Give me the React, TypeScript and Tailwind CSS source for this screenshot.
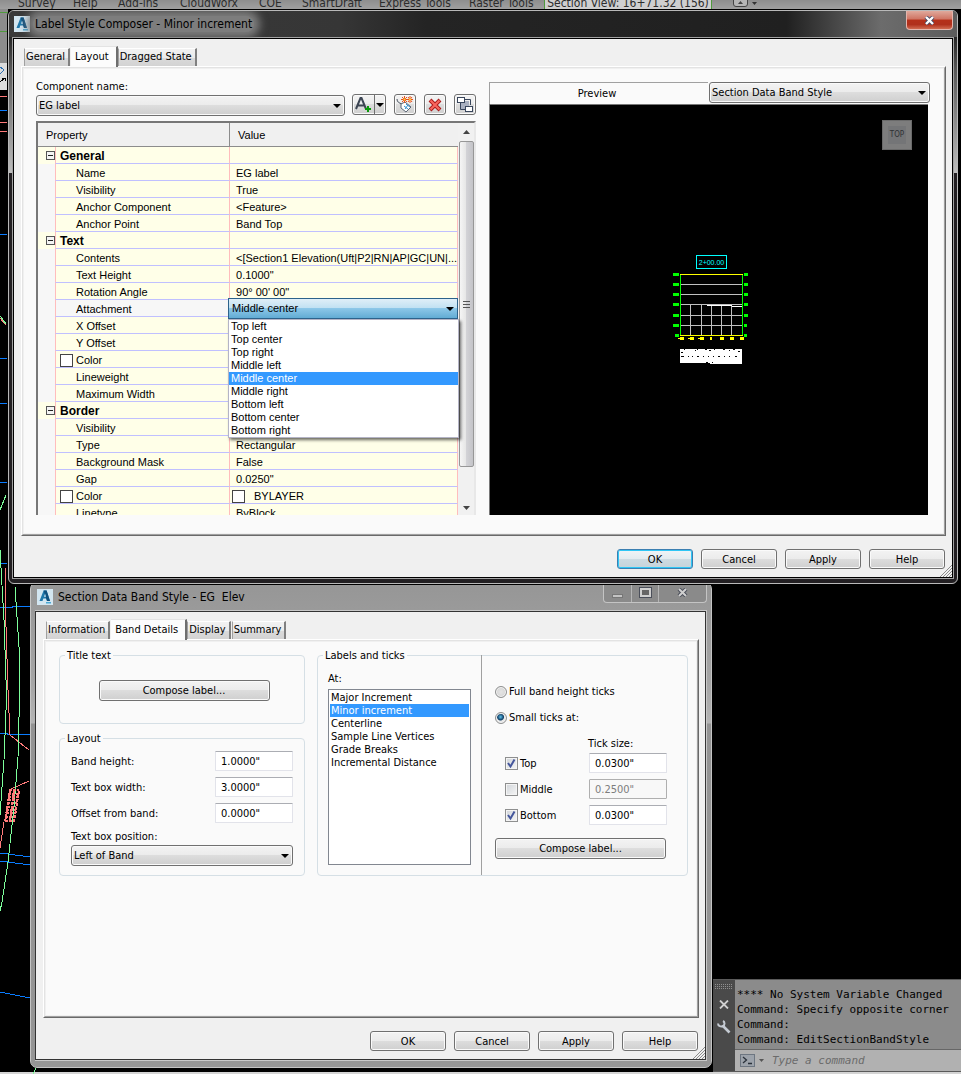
import React, { useState } from "react";
import clsx from "clsx";

const FACE =
  "bg-[linear-gradient(#f3f3f3,#ebebeb_50%,#dddddd_50%,#cfcfcf)] border border-[#707070] rounded-[3px] shadow-[inset_0_0_0_1px_#fafafa]";

interface PropertyRow {
  name: string;
  value?: string;
  group?: boolean;
  swatch?: boolean;
  valueSwatch?: boolean;
}

const PROPERTIES: PropertyRow[] = [
  { name: "General", group: true },
  { name: "Name", value: "EG label" },
  { name: "Visibility", value: "True" },
  { name: "Anchor Component", value: "<Feature>" },
  { name: "Anchor Point", value: "Band Top" },
  { name: "Text", group: true },
  { name: "Contents", value: "<[Section1 Elevation(Uft|P2|RN|AP|GC|UN|..." },
  { name: "Text Height", value: '0.1000"' },
  { name: "Rotation Angle", value: "90° 00' 00\"" },
  { name: "Attachment" },
  { name: "X Offset" },
  { name: "Y Offset" },
  { name: "Color", swatch: true },
  { name: "Lineweight" },
  { name: "Maximum Width" },
  { name: "Border", group: true },
  { name: "Visibility" },
  { name: "Type", value: "Rectangular" },
  { name: "Background Mask", value: "False" },
  { name: "Gap", value: '0.0250"' },
  { name: "Color", value: "BYLAYER", swatch: true, valueSwatch: true },
  { name: "Linetype", value: "ByBlock" },
];

const ATTACHMENTS = [
  "Top left",
  "Top center",
  "Top right",
  "Middle left",
  "Middle center",
  "Middle right",
  "Bottom left",
  "Bottom center",
  "Bottom right",
];

const INCREMENTS = [
  "Major Increment",
  "Minor increment",
  "Centerline",
  "Sample Line Vertices",
  "Grade Breaks",
  "Incremental Distance",
];

const RIBBON_TABS = [
  { label: "Survey", width: "w-[55px]" },
  { label: "Help", width: "w-[45px]" },
  { label: "Add-ins", width: "w-[62px]" },
  { label: "CloudWorx", width: "w-[79px]" },
  { label: "COE", width: "w-[43px]" },
  { label: "SmartDraft", width: "w-[77px]" },
  { label: "Express Tools", width: "w-[90px]" },
  { label: "Raster Tools", width: "w-[75px]" },
];

const Caret = () => (
  <svg width="8" height="4" viewBox="0 0 8 4" aria-hidden="true">
    <path d="M0 0h8L4 4z" fill="#000" />
  </svg>
);

const AppLogo = () => (
  <svg width="16" height="16" viewBox="0 0 16 16" aria-hidden="true">
    <rect width="16" height="16" fill="#d3e6f1" />
    <path d="M2.500 12 6.600 1.500h3L13 12h-3L9.300 9.500H6.300L5.500 12z" fill="#1f78ab" />
    <path d="M6.600 1.500h3L13 12h-3z" fill="#0f4f7d" />
    <path d="M7 7.800h2L8.100 4.800z" fill="#d3e6f1" />
    <path d="M9 13h5v1.500H9z" fill="#4aa8d4" />
  </svg>
);

interface SelectProps {
  id: string;
  label?: string;
  options: string[];
  className?: string;
}

const Select: React.FC<SelectProps> = ({ id, label, options, className }) => (
  <div className={clsx("relative h-[21px]", className)}>
    <select
      id={id}
      aria-label={label}
      className={clsx(FACE, "block w-full h-full appearance-none pl-[2px] pr-5 outline-none")}
    >
      {options.map((o) => (
        <option key={o}>{o}</option>
      ))}
    </select>
    <span className="absolute right-[4px] top-[9px] pointer-events-none">
      <Caret />
    </span>
  </div>
);

const DialogButtons = ({ primary }: { primary?: boolean }) => (
  <div className="flex justify-end gap-2 pr-px">
    {["OK", "Cancel", "Apply", "Help"].map((label) => (
      <button
        key={label}
        className={clsx(
          "w-[76px] h-5 text-center",
          primary && label === "OK"
            ? "rounded-[3px] border border-[#3c7fb1] shadow-[inset_0_0_0_1px_#2fc6f5] bg-[linear-gradient(#f0f4f6,#e3ebef_50%,#cddbe2_50%,#c6d3da)]"
            : FACE
        )}
      >
        {label}
      </button>
    ))}
  </div>
);

interface TabsProps {
  tabs: string[];
  active: string;
}

const Tabs: React.FC<TabsProps> = ({ tabs, active }) => (
  <div role="tablist" className="flex items-end">
    {tabs.map((tab) => (
      <button
        key={tab}
        role="tab"
        aria-selected={tab === active}
        className={clsx(
          "border-t text-left",
          tab === active
            ? "h-[21px] pl-[4px] pr-[7px] pb-[2px] -mb-px bg-[#fcfcfc] border-t-[#e3e3e3] border-r-2 border-r-[#6f6f6f] z-10"
            : "h-[18px] pl-px pr-[3px] mr-px pb-[3px] bg-[linear-gradient(#f2f2f2,#ebebeb_50%,#dadada_50%,#d3d3d3)] border-t-white border-l border-l-[#a0a0a0] border-r-2 border-r-[#808080]"
        )}
      >
        {tab}
      </button>
    ))}
  </div>
);

const TabPanel = ({
  className,
  children,
}: {
  className?: string;
  children: React.ReactNode;
}) => (
  <div className="border border-t-white border-l-white border-r-[#696969] border-b-[#696969]">
    <div className="border border-t-[#e3e3e3] border-l-[#e3e3e3] border-r-[#a0a0a0] border-b-[#a0a0a0]">
      <div className={clsx("border border-[#f0f0f0] bg-[#fafafa]", className)}>
        {children}
      </div>
    </div>
  </div>
);

const Grip = () => (
  <svg
    className="absolute right-0 bottom-0"
    width="12"
    height="12"
    viewBox="0 0 12 12"
    aria-hidden="true"
  >
    <path d="M0 12 12 0M3 12l9-9M6 12l6-6M9 12l3-3" stroke="#8c8c8c" fill="none" />
  </svg>
);

const ToolButton = ({
  label,
  children,
}: {
  label: string;
  children: React.ReactNode;
}) => (
  <button
    aria-label={label}
    className={clsx(FACE, "w-[22px] h-[21px] flex items-center justify-center")}
  >
    {children}
  </button>
);

const Swatch = () => (
  <span className="inline-block w-[13px] h-[13px] bg-white border border-[#444] shrink-0" />
);

const AttachmentPicker = () => {
  const [selected, setSelected] = useState("Middle center");

  return (
    <div className="absolute -left-[2px] -right-px -top-[2px] z-20">
      <div className="relative h-[21px]">
        <select
          aria-label="Attachment"
          value={selected}
          onChange={(e) => setSelected(e.target.value)}
          className="block w-full h-full appearance-none pl-[3px] outline-none border border-[#2c628b] bg-[linear-gradient(#e0eff8,#bfe0f2_50%,#8cc7e8_50%,#62acd4)]"
        >
          {ATTACHMENTS.map((a) => (
            <option key={a}>{a}</option>
          ))}
        </select>
        <span className="absolute right-[4px] top-[9px] pointer-events-none">
          <Caret />
        </span>
      </div>
      <ul
        role="listbox"
        aria-label="Attachment options"
        className="bg-white border border-[#b4b4c6] -mr-px shadow-[2px_2px_3px_rgba(0,0,0,0.6)]"
      >
        {ATTACHMENTS.map((a) => (
          <li
            key={a}
            role="option"
            aria-selected={a === selected}
            onClick={() => setSelected(a)}
            className={clsx(
              "leading-[13px] pl-[2px]",
              a === selected && "bg-[#3399ff] text-white"
            )}
          >
            {a}
          </li>
        ))}
      </ul>
    </div>
  );
};

const PropertyTable = () => (
  <table className="w-full table-fixed border-separate border-spacing-0 text-left leading-[13px]">
    <colgroup>
      <col className="w-[17px]" />
      <col className="w-[174px]" />
      <col />
    </colgroup>
    <thead>
      <tr className="h-6 bg-[#f0f0f0]">
        <th colSpan={2} className="p-0 pt-[2px] pl-2 font-normal border-b border-[#8c8c8c]">
          Property
        </th>
        <th className="p-0 pt-[2px] pl-2 font-normal border-b border-l border-[#8c8c8c]">
          Value
        </th>
      </tr>
    </thead>
    <tbody>
      {PROPERTIES.map((row, idx) => {
        const editing = row.name === "Attachment";
        return (
          <tr key={idx} className="h-[17px]">
            <td className={clsx("p-0", row.group ? "bg-[#ffffe8]" : "bg-[#f7f7f7]")}>
              {row.group && (
                <span className="flex w-[9px] h-[9px] ml-2 items-center justify-center border border-[#555] bg-[#f4f4f4]">
                  <span className="w-[5px] h-px bg-[#222]" />
                </span>
              )}
            </td>
            <td
              className={clsx(
                "p-0 pt-[2px] border-l border-l-[#ffbdbd] border-b border-b-[#c0c0ff] whitespace-nowrap",
                editing ? "bg-[#f7f7f7]" : "bg-[#ffffe8]"
              )}
            >
              {row.group ? (
                <b className="block pl-1 text-[12px]">{row.name}</b>
              ) : row.swatch ? (
                <span className="flex items-center gap-[3px] pl-1">
                  <Swatch />
                  {row.name}
                </span>
              ) : (
                <span className="block pl-5">{row.name}</span>
              )}
            </td>
            <td className="relative p-0 pt-[2px] border-l border-l-[#ffbdbd] border-r border-r-[#ffbdbd] border-b border-b-[#c0c0ff] bg-[#ffffe8] whitespace-nowrap">
              {editing ? (
                <AttachmentPicker />
              ) : row.valueSwatch ? (
                <span className="flex items-center gap-[9px] pl-[2px]">
                  <Swatch />
                  {row.value}
                </span>
              ) : (
                <span className="block pl-[6px]">{row.value}</span>
              )}
            </td>
          </tr>
        );
      })}
    </tbody>
  </table>
);

const ScrollBar = () => (
  <div className="w-4 shrink-0 flex flex-col items-center bg-[#f1f1f1]">
    <div className="h-[18px] flex items-center">
      <svg width="7" height="4" viewBox="0 0 7 4" aria-hidden="true">
        <path d="M0 4h7L3.500 0z" fill="#444" />
      </svg>
    </div>
    <div className="w-[15px] h-[326px] rounded-[2px] border border-[#979797] bg-[linear-gradient(90deg,#f5f5f5,#e6e6e6_45%,#d2d2d6_50%,#c4c4c8)] flex flex-col items-center justify-center gap-[2px]">
      <span className="w-[7px] h-px bg-[#555]" />
      <span className="w-[7px] h-px bg-[#555]" />
      <span className="w-[7px] h-px bg-[#555]" />
    </div>
    <div className="mt-auto h-[15px] flex items-center">
      <svg width="7" height="4" viewBox="0 0 7 4" aria-hidden="true">
        <path d="M0 0h7L3.500 4z" fill="#444" />
      </svg>
    </div>
  </div>
);

const BandPreview = () => (
  <svg width="78" height="112" viewBox="670 254 78 112" shapeRendering="crispEdges">
    <rect x="696.5" y="255.5" width="30" height="13" fill="none" stroke="#0ff" />
    <text
      x="711.500"
      y="264.500"
      fontSize="7"
      textAnchor="middle"
      fill="#0ff"
      fontFamily="Liberation Sans, sans-serif"
    >
      2+00.00
    </text>
    <path
      d="M681 284.500h62M681 294.500h62M681 304.500h62M681 315.500h62M681 325.500h62M690.500 305v30M701.500 305v30M711.500 305v30M721.500 305v30M731.500 305v30"
      stroke="#c0c0c0"
    />
    <path d="M707 305.500h25M732 306.500h10" stroke="#fff" />
    <path d="M680.500 274v62M742.500 274v62" stroke="#0f0" />
    <path d="M680 274.500h63M680 335.500h63" stroke="#ff0" />
    {[273, 283, 293, 303, 314, 324, 334].map((y) => (
      <g key={y} fill="#0f0">
        <rect x={y === 334 ? 675 : 673} y={y} width={y === 334 ? 4 : 6} height="3" />
        <rect x="744" y={y} width={y > 320 ? 3 : 4} height="3" />
      </g>
    ))}
    {[680, 690, 700, 710, 720, 730, 740].map((x) => (
      <rect key={x} x={x} y="337" width={x === 710 ? 2 : 4} height="3" fill="#ff0" />
    ))}
    <path d="M678 338.500h2M688 338.500h2M698 338.500h2" stroke="#ff0" />
    <rect x="680" y="349" width="62" height="14" fill="#fff" />
    <path
      d="M684 349.500h1M697 349.500h1M705 349.500h2M714 349.500h1M723 349.500h2M733 349.500h2M695 350.500h1M709 350.500h2M729 350.500h1M681 352.500h2M738 351.500h2M681 356.500h3M688 356.500h1M692 356.500h1M697 356.500h2M703 356.500h1M708 356.500h1M713 356.500h1M718 356.500h2M724 356.500h1M729 356.500h1M735 356.500h2M706 362.500h2M712 362.500h1"
      stroke="#000"
    />
    <rect x="710" y="363" width="32" height="1" fill="#fff" />
  </svg>
);

const LabelStyleComposer = () => (
  <section
    aria-label="Label Style Composer"
    className="absolute left-[7px] right-[2px] top-[9px] z-20 rounded-[7px] border border-black bg-[#222]"
  >
    <div className="rounded-[6px] border border-[#b9b9b9] px-[3px] pb-1 bg-[linear-gradient(#262626_26px,#5a5a5a_60px,#bdbdbd_162px,#221f22_162px)] overflow-hidden">
      <header className="-mx-[3px] h-[26px] pl-[5px] pr-[4px] flex items-center gap-[3px] bg-[linear-gradient(90deg,#3a3a3a,#363636_35%,#242424_44%,#202020_82%,#6c6c6c_92%,#5c5c5c)]">
        <AppLogo />
        <h1 className="text-[12px] leading-4 text-black px-[2px] bg-[#7d7d7d] rounded-[8px] shadow-[0_0_8px_6px_#7d7d7d]">
          Label Style Composer - Minor increment
        </h1>
        <button
          aria-label="Close"
          className="ml-auto self-start w-[47px] h-[19px] flex items-center justify-center rounded-b-[4px] border border-t-0 border-[#e3b5ad] bg-[linear-gradient(#e0a99c,#cf7463_45%,#b5301a_50%,#b0301c_75%,#d06a50)]"
        >
          <svg width="11" height="9" viewBox="0 0 11 9" aria-hidden="true">
            <path d="M2 1l7 7M9 1 2 8" stroke="#444a66" strokeWidth="4" />
            <path d="M2 1l7 7M9 1 2 8" stroke="#fff" strokeWidth="2.400" />
          </svg>
        </button>
      </header>
      <div className="border border-[#a3a3a3]">
        <div className="relative border border-black bg-[#f0f0f0] pt-[7px] pl-[7px] pr-[6px] pb-2">
          <div className="pl-[3px]">
            <Tabs tabs={["General", "Layout", "Dragged State"]} active="Layout" />
          </div>
          <TabPanel className="flex gap-[13px] pt-[11px] pl-3 pr-[13px] pb-[18px]">
            <div className="w-[440px] shrink-0">
              <label htmlFor="component-name" className="block">
                Component name:
              </label>
              <div className="mt-px flex items-end h-[22px]">
                <Select id="component-name" options={["EG label"]} className="flex-1 mr-[7px]" />
                <div className={clsx(FACE, "w-[34px] h-[21px] mr-2 mb-px flex")}>
                  <button aria-label="Add text component" className="w-[21px] pl-px">
                    <svg width="19" height="18" viewBox="0 0 19 18" aria-hidden="true">
                      <path
                        d="M2 13 6.500 2h1L12 13M4 9.500h6"
                        fill="none"
                        stroke="#3d4654"
                        strokeWidth="2"
                      />
                      <path d="M14 10v6M11 13h6" stroke="#0a9a0a" strokeWidth="2" />
                    </svg>
                  </button>
                  <button
                    aria-label="More component types"
                    className="flex-1 flex items-center justify-center border-l border-[#707070]"
                  >
                    <Caret />
                  </button>
                </div>
                <div className="flex gap-2 mb-px">
                  <ToolButton label="Copy component">
                    <svg width="18" height="17" viewBox="0 0 18 17" aria-hidden="true">
                      <path d="M1 3c0 3 2 4 5 5" fill="none" stroke="#4b5563" />
                      <path d="m5 8 4-2 6 5-5 5-5-4z" fill="#fff" stroke="#5b6675" />
                      <path d="m8 10 4 3M10 8l4 3M12 9l-3 4" stroke="#2f8fd0" />
                      <path
                        d="M8.500 0v7M5 3.500h7M6 1l5 5M11 1 6 6M14 0v7M12 3.500h5M12 1l4 5M16 1l-4 5"
                        stroke="#e8501c"
                      />
                      <path d="M7.500 2.500h2v2h-2zM13 2.500h2v2h-2z" fill="#ffd23c" />
                    </svg>
                  </ToolButton>
                  <ToolButton label="Delete component">
                    <svg width="14" height="14" viewBox="0 0 14 14" aria-hidden="true">
                      <path d="m2 2 10 10M12 2 2 12" stroke="#a81818" strokeWidth="4" />
                      <path d="m2.500 2.500 9 9M11.500 2.500l-9 9" stroke="#f8665e" strokeWidth="2.200" />
                    </svg>
                  </ToolButton>
                  <ToolButton label="Component draw order">
                    <svg width="18" height="17" viewBox="0 0 18 17" aria-hidden="true">
                      <rect x="5" y="5" width="8" height="8" fill="#a9b0c0" />
                      <path d="M9 3.500h5.500V9M4.500 7v6.500H10" fill="none" stroke="#39465c" />
                      <rect x="1.500" y="1.500" width="7" height="5" fill="#fff" stroke="#39465c" />
                      <rect x="9.500" y="10.500" width="7" height="5" fill="#fff" stroke="#39465c" />
                    </svg>
                  </ToolButton>
                </div>
              </div>
              <div className="mt-[5px] h-[394px] flex overflow-hidden border-t-2 border-l-2 border-r-2 border-t-[#777] border-l-[#777] border-r-[#e8e8e8] font-['Liberation_Sans',Arial,sans-serif]">
                <div className="flex-1">
                  <PropertyTable />
                </div>
                <ScrollBar />
              </div>
            </div>
            <div className="flex-1 min-w-0 pt-[2px] flex flex-col">
              <div className="flex gap-px h-[22px]">
                <div className="flex-1 flex items-center justify-center pr-1 border-t border-l border-[#a0a0a0]">
                  Preview
                </div>
                <Select
                  id="preview-style"
                  label="Preview style"
                  options={["Section Data Band Style"]}
                  className="w-[221px]"
                />
              </div>
              <div className="relative flex-1 mr-[2px] pb-px flex items-center justify-center bg-black border-t border-l border-[#777]">
                <BandPreview />
                <div className="absolute top-[15px] right-4 w-[30px] h-[30px] p-[5px] bg-[#7d7d7d] border border-[#6a6a6a]">
                  <div className="h-full flex items-center justify-center bg-[#747577] text-[8px] leading-none text-[#2f3134]">
                    TOP
                  </div>
                </div>
              </div>
            </div>
          </TabPanel>
          <div className="mt-[13px]">
            <DialogButtons primary />
          </div>
          <Grip />
        </div>
      </div>
    </div>
  </section>
);

interface TextFieldProps {
  id: string;
  label?: string;
  value: string;
  disabled?: boolean;
}

const TextField: React.FC<TextFieldProps> = ({ id, label, value, disabled }) => (
  <input
    id={id}
    aria-label={label}
    defaultValue={value}
    disabled={disabled}
    className={clsx(
      "w-[78px] h-5 px-[5px] border rounded-[1px] outline-none",
      disabled
        ? "bg-[#f8f8f8] text-[#7d7d7d] border-[#afafaf]"
        : "bg-white border-[#e2e3ea] border-t-[#abadb3]"
    )}
  />
);

const GroupBox = ({
  legend,
  className,
  children,
}: {
  legend: string;
  className?: string;
  children: React.ReactNode;
}) => (
  <fieldset className={clsx("border border-[#d5dfe5] rounded-[4px]", className)}>
    <legend className="ml-[5px] px-[2px]">{legend}</legend>
    {children}
  </fieldset>
);

const TickRow = ({
  name,
  value,
  enabled,
}: {
  name: string;
  value: string;
  enabled?: boolean;
}) => {
  const [checked, setChecked] = useState(!!enabled);
  const id = `tick-${name.toLowerCase()}`;

  return (
    <div className="flex items-center justify-between pl-[10px] h-5">
      <label htmlFor={id} className="flex items-center gap-[2px]">
        <span className="relative w-[13px] h-[13px]">
          <input
            id={id}
            type="checkbox"
            checked={checked}
            onChange={(e) => setChecked(e.target.checked)}
            className="block w-full h-full appearance-none border border-[#8e8f8f] bg-[linear-gradient(135deg,#d0d4d9,#f6f6f6)] shadow-[inset_0_0_0_1px_#f4f4f4]"
          />
          {checked && (
            <svg
              className="absolute inset-0 pointer-events-none"
              width="13"
              height="13"
              viewBox="0 0 13 13"
              aria-hidden="true"
            >
              <path d="m3 6 2.500 3.500L9.500 2.500" fill="none" stroke="#44569c" strokeWidth="2" />
            </svg>
          )}
        </span>
        {name}
      </label>
      <TextField
        id={`${id}-size`}
        label={`${name} tick size`}
        value={value}
        disabled={!enabled}
      />
    </div>
  );
};

const TickMode = ({
  label,
  defaultChecked,
}: {
  label: string;
  defaultChecked?: boolean;
}) => (
  <label className="flex items-center gap-[2px] h-[13px]">
    <input
      type="radio"
      name="tick-mode"
      defaultChecked={defaultChecked}
      className="appearance-none w-3 h-3 rounded-full border border-[#8e8f8f] bg-[radial-gradient(#e4e4e4,#d0d0d0)] shadow-[inset_0_0_0_1px_#f4f4f4] checked:bg-[radial-gradient(circle_at_45%_40%,#5fc3ec_0,#0f3e66_3px,#e8e8e8_4px)]"
    />
    {label}
  </label>
);

const IncrementList = () => {
  const [selected, setSelected] = useState("Minor increment");

  return (
    <ul
      role="listbox"
      aria-labelledby="at-label"
      className="h-[176px] p-[1px] bg-white border border-[#828790]"
    >
      {INCREMENTS.map((item) => (
        <li
          key={item}
          role="option"
          aria-selected={item === selected}
          onClick={() => setSelected(item)}
          className={clsx(
            "leading-[13px] pl-px",
            item === selected && "bg-[#3399ff] text-white"
          )}
        >
          {item}
        </li>
      ))}
    </ul>
  );
};

const SectionDataBandStyle = () => (
  <section
    aria-label="Section Data Band Style"
    className="absolute left-[30px] right-[249px] top-[582px] z-10 rounded-[7px] border border-[#c4c4c4] bg-[linear-gradient(#969696,#a5a5a5_100px,#b4b4b4_140px,#939393_141px,#959595)] px-[4px] pb-[6px]"
  >
    <header className="h-[27px] pl-[2px] flex items-center gap-[5px]">
      <AppLogo />
      <h1 className="text-[12px] leading-4 whitespace-pre">
        {"Section Data Band Style - EG  Elev"}
      </h1>
      <div className="ml-auto self-start h-[20px] flex rounded-b-[4px] border border-t-0 border-[#c4c4c4] divide-x divide-[#b5b5b5] bg-[#8a8a8a]">
        <button aria-label="Minimize" className="w-[28px] flex items-end justify-center pb-1">
          <span className="w-[11px] h-[4px] bg-[#c4c4c4] border border-[#777]" />
        </button>
        <button aria-label="Maximize" className="w-[27px] flex items-center justify-center">
          <span className="w-[11px] h-[9px] border-2 border-[#cfcfcf] bg-[#666] outline outline-[#4b4f5a]" />
        </button>
        <button aria-label="Close" className="w-[47px] flex items-center justify-center">
          <svg width="11" height="9" viewBox="0 0 11 9" aria-hidden="true">
            <path d="M2 1l7 7M9 1 2 8" stroke="#4b4f5a" strokeWidth="4" />
            <path d="M2 1l7 7M9 1 2 8" stroke="#cfcfcf" strokeWidth="2" />
          </svg>
        </button>
      </div>
    </header>
    <div className="border border-[#c8c8c8] border-l-0">
      <div className="relative border border-[#333] bg-[#f0f0f0] pt-[7px] pl-[7px] pr-[6px] pb-2">
        <div className="pl-[3px]">
          <Tabs
            tabs={["Information", "Band Details", "Display", "Summary"]}
            active="Band Details"
          />
        </div>
        <TabPanel className="min-h-[375px] flex items-start gap-3 pt-[7px] pl-[13px] pr-[8px]">
          <div className="w-[246px] shrink-0 flex flex-col gap-2">
            <GroupBox legend="Title text" className="h-[75px]">
              <div className="pt-[18px] pl-[4px] flex justify-center">
                <button className={clsx(FACE, "w-[171px] h-[21px]")}>Compose label...</button>
              </div>
            </GroupBox>
            <GroupBox legend="Layout">
              <div className="pt-[6px] px-[11px] pb-[9px]">
                <div className="flex flex-col gap-[6px]">
                  <div className="flex items-center justify-between">
                    <label htmlFor="band-height">Band height:</label>
                    <TextField id="band-height" value={'1.0000"'} />
                  </div>
                  <div className="flex items-center justify-between">
                    <label htmlFor="box-width">Text box width:</label>
                    <TextField id="box-width" value={'3.0000"'} />
                  </div>
                  <div className="flex items-center justify-between">
                    <label htmlFor="band-offset">Offset from band:</label>
                    <TextField id="band-offset" value={'0.0000"'} />
                  </div>
                </div>
                <label htmlFor="box-position" className="block mt-[7px] mb-[2px]">
                  Text box position:
                </label>
                <Select id="box-position" options={["Left of Band"]} />
              </div>
            </GroupBox>
          </div>
          <GroupBox legend="Labels and ticks" className="flex-1">
            <div className="flex h-[220px] -mt-[7px]">
              <div className="flex-1 pt-[17px] px-[10px]">
                <div id="at-label" className="mb-[4px]">
                  At:
                </div>
                <IncrementList />
              </div>
              <div className="w-[206px] border-l border-[#a0a0a0] pl-[13px] pr-5 pt-[30px]">
                <div className="flex flex-col gap-[13px]">
                  <TickMode label="Full band height ticks" />
                  <TickMode label="Small ticks at:" defaultChecked />
                </div>
                <div className="mt-[13px] mb-[3px] ml-auto w-[79px]">Tick size:</div>
                <div className="flex flex-col gap-[6px]">
                  <TickRow name="Top" value={'0.0300"'} enabled />
                  <TickRow name="Middle" value={'0.2500"'} />
                  <TickRow name="Bottom" value={'0.0300"'} enabled />
                </div>
                <button className={clsx(FACE, "mt-[13px] w-[171px] h-[21px]")}>
                  Compose label...
                </button>
              </div>
            </div>
          </GroupBox>
        </TabPanel>
        <div className="mt-[13px]">
          <DialogButtons />
        </div>
        <Grip />
      </div>
    </div>
  </section>
);

const CommandLine = () => (
  <section
    aria-label="Command line"
    className="absolute right-0 bottom-[2px] w-[248px] flex border-t border-b border-[#5a5a5a] text-[11px] font-['DejaVu_Sans_Mono',monospace]"
  >
    <div className="w-[22px] flex flex-col items-center gap-[10px] pt-[4px] bg-[#4a4a4a] text-[#d5d5d5]">
      <svg width="18" height="6" viewBox="0 0 18 6" aria-hidden="true">
        <path
          d="M0 .5h18M0 2.500h18M0 4.500h18"
          stroke="#8f8f8f"
          strokeDasharray="1 1"
        />
      </svg>
      <button aria-label="Close command line" className="h-[10px] flex items-start">
        <svg width="10" height="9" viewBox="0 0 10 9" aria-hidden="true">
          <path d="m1 .5 8 8M9 .5l-8 8" stroke="#d0d0d0" strokeWidth="1.800" />
        </svg>
      </button>
      <button aria-label="Customize">
        <svg width="14" height="14" viewBox="0 0 14 14" aria-hidden="true">
          <path d="m6 6 6.500 6.500" stroke="#c4cad2" strokeWidth="2.600" />
          <path
            d="M1 3.500C1 6 4 7 6 6s2-4 0-5"
            fill="none"
            stroke="#c4cad2"
            strokeWidth="2"
          />
        </svg>
      </button>
    </div>
    <div className="flex-1 min-w-0 bg-[#8b8b8b] text-black">
      <div className="pt-[7px] pb-[2px] pl-[2px] leading-[15px] whitespace-nowrap">
        <p>**** No System Variable Changed</p>
        <p>Command: Specify opposite corner</p>
        <p>Command:</p>
        <p>Command: EditSectionBandStyle</p>
      </div>
      <div className="flex items-center h-[22px] pl-[5px] bg-[#b1b1b1] border-t border-[#666]">
        <svg width="15" height="13" viewBox="0 0 15 13" aria-hidden="true">
          <rect x=".5" y=".5" width="14" height="12" fill="#9da3ab" stroke="#6d7681" />
          <path d="m3 3 3.500 3L3 9M8 9.500h4" fill="none" stroke="#2b323b" strokeWidth="1.300" />
        </svg>
        <svg className="ml-1" width="5" height="3" viewBox="0 0 5 3" aria-hidden="true">
          <path d="M0 0h5L2.500 3z" fill="#555" />
        </svg>
        <input
          aria-label="Command"
          placeholder="Type a command"
          className="ml-2 flex-1 min-w-0 bg-transparent italic outline-none placeholder:text-[#6b6b6b]"
        />
      </div>
    </div>
  </section>
);

const Drawing = () => (
  <svg
    className="absolute left-0 top-0"
    width="40"
    height="1074"
    viewBox="0 0 40 1074"
    fill="none"
    shapeRendering="crispEdges"
    aria-hidden="true"
  >
    <rect y="9" width="8" height="81" fill="#8c8c8c" />
    <rect y="63" width="8" height="27" fill="#dcdcdc" />
    <path d="M0 12.500h8M0 31.500h8" stroke="#4f9a3c" />
    <path d="m0 67 4 3-4 4" stroke="#2d6fb0" />
    <path d="m0 82 5-4M2 78h3v3" stroke="#000" />
    <path
      d="M0 110.500h7M0 234.500h7M0 358.500h7M0 403.500h7M0 482.500h7M0 563.500h7M0 607.500h12l1-1h17M0 733.500h7l1 1h22M0 853l30 4M0 861l30 4M0 992l30 6"
      stroke="#0a7cff"
    />
    <path
      d="M0 96.500h7M0 122.500h7M0 131.500h7M0 318l6 7M5 567l1 60 2 63 2 45 19 15M29 781l-18 8M4 822l-4 26"
      stroke="#ff7a7a"
    />
    <path
      d="M0 316l6 8M0 510l6-15M0 550l4 70 2 60v30l-2 50-4 55M15 587l4 60v70l-1 40-4 50-6 55-6 40-2 9M36 1068l-3 6"
      stroke="#7dff9b"
    />
    <path
      d="M9 790h10M8 794h11M8 797h10M8 800h10M7 803h10M7 807h9M6 810h10M6 813h9M5 817h9M5 821h9M10 790l-5 32M14 790l-4 32M19 791l-5 31"
      stroke="#ff7a7a"
      strokeWidth="2"
      strokeDasharray="3 1"
    />
  </svg>
);

const Ribbon = () => (
  <nav className="h-[9px] pl-[18px] flex overflow-hidden bg-[linear-gradient(#8e8e8e,#a0a0a0)] text-[12px] leading-4 text-[#2c2c2c]">
    {RIBBON_TABS.map(({ label, width }) => (
      <a
        key={label}
        href="#"
        className={clsx("-mt-[5px] shrink-0 whitespace-nowrap", width)}
      >
        {label}
      </a>
    ))}
    <a
      href="#"
      className="w-[168px] shrink-0 h-5 -mt-[5px] text-center whitespace-nowrap bg-[#cfcfcf] border-x border-[#4f9a3c]"
    >
      Section View: 16+71.32 (156)
    </a>
    <span className="ml-[21px] -mt-[4px] w-[15px] h-[11px] rounded-[3px] border border-[#444] bg-[#b5b5b5] flex items-end justify-center pb-[2px]">
      <svg width="5" height="3" viewBox="0 0 5 3" aria-hidden="true">
        <path d="M0 3h5L2.500 0z" fill="#444" />
      </svg>
    </span>
    <svg className="ml-[4px] mt-[2px]" width="5" height="3" viewBox="0 0 5 3" aria-hidden="true">
      <path d="M0 0h5L2.500 3z" fill="#333" />
    </svg>
  </nav>
);

const App: React.FC = () => (
  <main className="relative min-h-screen flex flex-col overflow-hidden bg-black text-black text-[11px] leading-[13px] font-['DejaVu_Sans_Condensed','Noto_Sans',sans-serif]">
    <Drawing />
    <Ribbon />
    <LabelStyleComposer />
    <SectionDataBandStyle />
    <CommandLine />
    <div className="mt-auto h-[2px] bg-[#d4d4d4]" />
  </main>
);

export default App;
